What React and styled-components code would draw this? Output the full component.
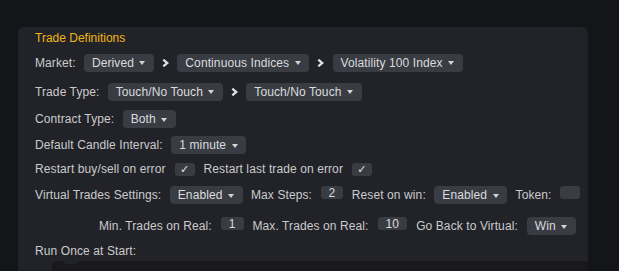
import React from "react";
import styled, { createGlobalStyle } from "styled-components";

const Global = createGlobalStyle`
  html, body { margin: 0; padding: 0; background: #141519; }
  body { font-family: "Liberation Sans", Arial, sans-serif; font-size: 12px; letter-spacing: 0.1px; }
`;

const Page = styled.div`
  width: 619px;
  height: 271px;
  box-sizing: border-box;
  padding: 27px 31px 0 18px;
  background: #141519;
  overflow: hidden;
`;

const Panel = styled.section`
  height: 244px;
  background: #222328;
  border-radius: 6px 6px 0 0;
  padding-left: 17px;
  display: flex;
  flex-direction: column;
  overflow: hidden;
  color: #cbcbcd;
`;

const Row = styled.div`
  height: ${(p) => p.$h}px;
  flex: none;
  display: flex;
  align-items: center;
  gap: ${(p) => p.$gap || 8.5}px;
  padding-left: ${(p) => p.$indent || 0}px;
  white-space: nowrap;
`;

const Title = styled.span`
  color: #f1b418;
  font-size: 12px;
  line-height: 14px;
  letter-spacing: 0;
`;

const Label = styled.span`
  line-height: 14px;
  color: #cbcbcd;
`;

const Dropdown = styled.div`
  height: 18px;
  box-sizing: border-box;
  padding: 0 8.5px 0 8px;
  display: flex;
  align-items: center;
  gap: 5.5px;
  background: #393c43;
  border-radius: 4px;
  color: #dbdbdd;
  line-height: 14px;
`;

const Caret = styled.span`
  width: 0;
  height: 0;
  margin-top: 1px;
  border-left: 3.5px solid transparent;
  border-right: 3.5px solid transparent;
  border-top: 4px solid #d4d4d6;
`;

const Sep = styled.svg`
  width: 7px;
  height: 8px;
  flex: none;
`;

const InputBox = styled.div`
  min-width: 20px;
  height: 13px;
  box-sizing: border-box;
  padding: 1px 8px 0;
  margin-bottom: 5px;
  background: #393c43;
  border-radius: 3px;
  color: #dbdbdd;
  font-size: 12px;
  line-height: 14px;
  display: flex;
  align-items: center;
  justify-content: center;
`;

const Check = styled.div`
  width: 20px;
  height: 13px;
  background: #393c43;
  border-radius: 3px;
  color: #e6e6e8;
  line-height: 13px;
  text-align: center;
  font-family: "DejaVu Sans", sans-serif;
  font-size: 11px;
`;

const Statement = styled.div`
  margin-left: 17px;
  flex: 1;
  background: #19191c;
  border-radius: 5px 0 0 0;
  position: relative;
  &::before {
    content: "";
    position: absolute;
    top: 0;
    left: 12px;
    width: 14px;
    height: 3px;
    background: #222328;
    border-radius: 0 0 5px 5px;
  }
`;

const Chevron = () => (
  <Sep viewBox="0 0 7 8">
    <polyline
      points="1.3,0.7 5.3,4 1.3,7.3"
      fill="none"
      stroke="#e0e0e2"
      strokeWidth="2.3"
    />
  </Sep>
);

const Select = ({ children }) => (
  <Dropdown>
    {children}
    <Caret />
  </Dropdown>
);

export default function App() {
  return (
    <>
      <Global />
      <Page>
        <Panel>
          <Row $h={22}>
            <Title>Trade Definitions</Title>
          </Row>
          <Row $h={27} $gap={8.2}>
            <Label>Market:</Label>
            <Select>Derived</Select>
            <Chevron />
            <Select>Continuous Indices</Select>
            <Chevron />
            <Select>Volatility 100 Index</Select>
          </Row>
          <Row $h={31} $gap={8.2}>
            <Label>Trade Type:</Label>
            <Select>Touch/No Touch</Select>
            <Chevron />
            <Select>Touch/No Touch</Select>
          </Row>
          <Row $h={24}>
            <Label>Contract Type:</Label>
            <Select>Both</Select>
          </Row>
          <Row $h={28}>
            <Label>Default Candle Interval:</Label>
            <Select>1 minute</Select>
          </Row>
          <Row $h={20} $gap={9}>
            <Label>Restart buy/sell on error</Label>
            <Check>✓</Check>
            <Label>Restart last trade on error</Label>
            <Check>✓</Check>
          </Row>
          <Row $h={32}>
            <Label>Virtual Trades Settings:</Label>
            <Select>Enabled</Select>
            <Label>Max Steps:</Label>
            <InputBox>2</InputBox>
            <Label>Reset on win:</Label>
            <Select>Enabled</Select>
            <Label>Token:</Label>
            <InputBox />
          </Row>
          <Row $h={30} $gap={9} $indent={64}>
            <Label>Min. Trades on Real:</Label>
            <InputBox>1</InputBox>
            <Label>Max. Trades on Real:</Label>
            <InputBox>10</InputBox>
            <Label>Go Back to Virtual:</Label>
            <Select>Win</Select>
          </Row>
          <Row $h={20}>
            <Label>Run Once at Start:</Label>
          </Row>
          <Statement />
        </Panel>
      </Page>
    </>
  );
}
